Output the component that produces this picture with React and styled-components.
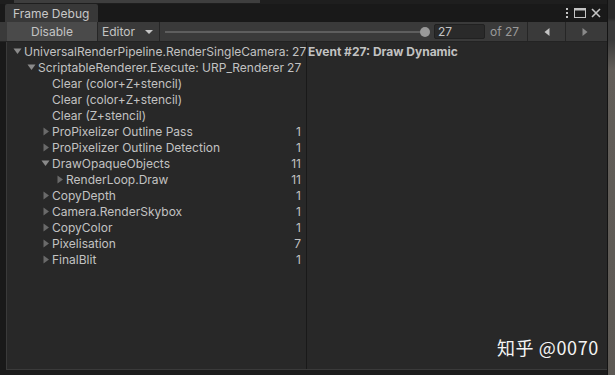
import React from 'react';
import styled, { createGlobalStyle } from 'styled-components';

const Global = createGlobalStyle`
  html, body {
    margin: 0;
    padding: 0;
    background: #1c1c1c;
  }
  body {
    width: 615px;
    height: 375px;
    overflow: hidden;
    font-family: Inter, "Noto Sans", sans-serif;
  }
`

const Page = styled.div`
  display: flex;
  flex-direction: row;
  width: 615px;
  height: 375px;
`

const Window = styled.div`
  display: flex;
  flex-direction: column;
  width: 607px;
  height: 370px;
  background: #191919;
`

const Behind = styled.div`
  flex: 1;
  background: linear-gradient(to bottom, #2a2a2a 0px, #2a2a2a 18px, #3a3a3a 22px, #3a3a3a 40px, #625e59 70px, #5d5954 100%);
  border-left: 1px solid #141414;
`

const TopStrip = styled.div`
  height: 4px;
  display: flex;
  flex-direction: row;
  background: #1e1e1e;
`

const TopPiece = styled.div`
  margin-left: 14px;
  width: 246px;
  height: 3px;
  background: #3e3e3e;
`

const TabBar = styled.div`
  height: 18px;
  display: flex;
  flex-direction: row;
  align-items: stretch;
  justify-content: space-between;
  padding-left: 5px;
  padding-right: 6px;
`

const Tab = styled.div`
  width: 93px;
  display: flex;
  align-items: center;
  padding-left: 8px;
  box-sizing: border-box;
  background: #383838;
  color: #c8c8c8;
  font-size: 12px;
  border-radius: 2px 2px 0 0;
`

const TabIcons = styled.div`
  display: flex;
  flex-direction: row;
  align-items: center;
  gap: 5px;
`

const Toolbar = styled.div`
  height: 20px;
  display: flex;
  flex-direction: row;
  align-items: stretch;
  background: #3a3a3a;
  border-bottom: 1px solid #232323;
  box-sizing: border-box;
  padding-left: 7px;
  color: #c4c4c4;
  font-size: 12px;
`

const ToolButton = styled.div`
  width: ${p => p.w}px;
  display: flex;
  align-items: center;
  justify-content: center;
  background: ${p => p.active ? '#4a4a4a' : 'transparent'};
  border-right: 1px solid #262626;
  box-sizing: border-box;
`

const Dropdown = styled.div`
  width: 62px;
  display: flex;
  align-items: center;
  justify-content: space-between;
  padding: 0 6px 0 4px;
  box-sizing: border-box;
  border-right: 1px solid #262626;
`

const Caret = styled.span`
  width: 0;
  height: 0;
  border-left: 4px solid transparent;
  border-right: 4px solid transparent;
  border-top: 4px solid #c4c4c4;
`

const Slider = styled.div`
  width: 270px;
  display: flex;
  align-items: center;
  padding-left: 5px;
  box-sizing: border-box;
`

const Track = styled.div`
  flex: 1;
  height: 2px;
  background: #5e5e5e;
`

const Thumb = styled.div`
  width: 10px;
  height: 10px;
  border-radius: 50%;
  background: #999999;
  margin-left: -3px;
`

const NumberField = styled.div`
  width: 51px;
  margin: 2px 0 2px 4px;
  background: #2a2a2a;
  border: 1px solid #212121;
  border-radius: 2px;
  display: flex;
  align-items: center;
  padding-left: 3px;
  box-sizing: border-box;
`

const OfLabel = styled.div`
  width: 43px;
  display: flex;
  align-items: center;
  padding-left: 5px;
  box-sizing: border-box;
  color: #9a9a9a;
  border-right: 1px solid #262626;
`

const StepButton = styled.div`
  width: ${p => p.w}px;
  display: flex;
  align-items: center;
  justify-content: center;
  border-right: ${p => p.last ? 'none' : '1px solid #262626'};
  box-sizing: border-box;
`

const Body = styled.div`
  flex: 1;
  display: flex;
  flex-direction: row;
  background: #282828;
  border-left: 1px solid #3a3a3a;
  border-bottom: 1px solid #3a3a3a;
  margin-left: 6px;
`

const Tree = styled.div`
  width: 299px;
  border-right: 1px solid #191919;
  display: flex;
  flex-direction: column;
  padding-top: 1px;
`

const Row = styled.div`
  height: 16px;
  display: flex;
  flex-direction: row;
  align-items: center;
  padding-left: ${p => 4 + p.level * 14}px;
  padding-right: 5px;
  color: #c2c2c2;
  font-size: 12px;
  white-space: nowrap;
`

const Arrow = styled.span`
  width: 13px;
  display: flex;
  justify-content: center;
  flex-shrink: 0;
`

const Name = styled.span`
  flex: 1;
`

const Count = styled.span`
  text-align: right;
  margin-left: 3px;
`

const Detail = styled.div`
  flex: 1;
  padding: 2px 0 0 1px;
  color: #c2c2c2;
  font-size: 12px;
  font-weight: 700;
`

const Watermark = styled.div`
  position: absolute;
  left: 497px;
  top: 334px;
  color: #f4f4f4;
  font-size: 18px;
  font-family: "Noto Sans CJK SC", "Noto Sans", sans-serif;
  letter-spacing: 0.6px;
`

const Open = () => (
  <svg width="9" height="8" viewBox="0 0 9 8"><path d="M0.5 1.5 L8.5 1.5 L4.5 7 Z" fill="#8a8a8a" /></svg>
)
const Closed = () => (
  <svg width="8" height="9" viewBox="0 0 8 9"><path d="M1.5 0.5 L7 4.5 L1.5 8.5 Z" fill="#6a6a6a" /></svg>
)

const rows = [
  { level: 0, arrow: 'open', name: 'UniversalRenderPipeline.RenderSingleCamera:', count: 27 },
  { level: 1, arrow: 'open', name: 'ScriptableRenderer.Execute: URP_Renderer', count: 27 },
  { level: 2, name: 'Clear (color+Z+stencil)' },
  { level: 2, name: 'Clear (color+Z+stencil)' },
  { level: 2, name: 'Clear (Z+stencil)' },
  { level: 2, arrow: 'closed', name: 'ProPixelizer Outline Pass', count: 1 },
  { level: 2, arrow: 'closed', name: 'ProPixelizer Outline Detection', count: 1 },
  { level: 2, arrow: 'open', name: 'DrawOpaqueObjects', count: 11 },
  { level: 3, arrow: 'closed', name: 'RenderLoop.Draw', count: 11 },
  { level: 2, arrow: 'closed', name: 'CopyDepth', count: 1 },
  { level: 2, arrow: 'closed', name: 'Camera.RenderSkybox', count: 1 },
  { level: 2, arrow: 'closed', name: 'CopyColor', count: 1 },
  { level: 2, arrow: 'closed', name: 'Pixelisation', count: 7 },
  { level: 2, arrow: 'closed', name: 'FinalBlit', count: 1 },
]

export default function App() {
  return (
    <Page>
      <Global />
      <Window>
        <TopStrip><TopPiece /></TopStrip>
        <TabBar>
          <Tab>Frame Debug</Tab>
          <TabIcons>
            <svg width="4" height="12" viewBox="0 0 4 12">
              <rect x="1" y="1" width="2" height="2" fill="#c4c4c4" />
              <rect x="1" y="5" width="2" height="2" fill="#c4c4c4" />
              <rect x="1" y="9" width="2" height="2" fill="#c4c4c4" />
            </svg>
            <svg width="12" height="10" viewBox="0 0 12 10">
              <rect x="0.5" y="0.5" width="11" height="9" fill="none" stroke="#c4c4c4" />
              <rect x="0.5" y="0.5" width="11" height="2" fill="#c4c4c4" />
            </svg>
            <svg width="10" height="10" viewBox="0 0 10 10">
              <path d="M1 1 L9 9 M9 1 L1 9" stroke="#c4c4c4" strokeWidth="1.6" />
            </svg>
          </TabIcons>
        </TabBar>
        <Toolbar>
          <ToolButton w={91} active>Disable</ToolButton>
          <Dropdown>Editor<Caret /></Dropdown>
          <Slider><Track /><Thumb /></Slider>
          <NumberField>27</NumberField>
          <OfLabel>of 27</OfLabel>
          <StepButton w={38}>
            <svg width="6" height="8" viewBox="0 0 6 8"><path d="M5.5 0 L0.5 4 L5.5 8 Z" fill="#c4c4c4" /></svg>
          </StepButton>
          <StepButton w={37} last>
            <svg width="6" height="8" viewBox="0 0 6 8"><path d="M0.5 0 L5.5 4 L0.5 8 Z" fill="#8a8a8a" /></svg>
          </StepButton>
        </Toolbar>
        <Body>
          <Tree>
            {rows.map((r, i) => (
              <Row key={i} level={r.level}>
                <Arrow>{r.arrow === 'open' ? <Open /> : r.arrow === 'closed' ? <Closed /> : null}</Arrow>
                <Name>{r.name}</Name>
                {r.count !== undefined && <Count>{r.count}</Count>}
              </Row>
            ))}
          </Tree>
          <Detail>Event #27: Draw Dynamic</Detail>
        </Body>
      </Window>
      <Behind />
      <Watermark>知乎 @0070</Watermark>
    </Page>
  );
}
